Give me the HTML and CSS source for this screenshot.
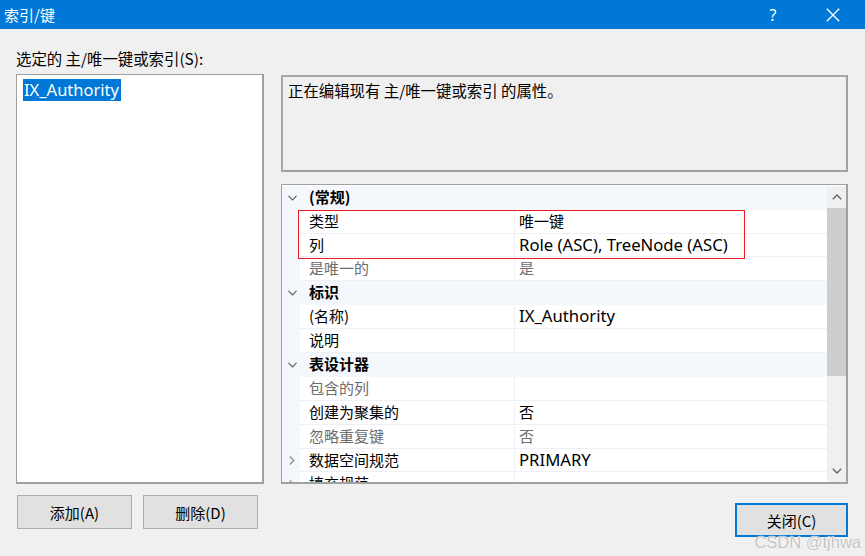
FILE: index.html
```html
<!DOCTYPE html>
<html lang="zh-CN">
<head>
<meta charset="utf-8">
<title>索引/键</title>
<link rel="stylesheet" href="styles.css">
</head>
<body>
<div class="window">
  <div class="titlebar">
    <span class="title">索引/键</span>
    <div class="tb-buttons">
      <span class="tb-help">?</span>
      <span class="tb-close">
        <svg width="14" height="14" viewBox="0 0 14 14"><path d="M0.8 0.8 L13.2 13.2 M13.2 0.8 L0.8 13.2" stroke="#fff" stroke-width="1.3" fill="none"/></svg>
      </span>
    </div>
  </div>
  <div class="content">
    <div class="left-col">
      <div class="label">选定的 主/唯一键或索引(S):</div>
      <div class="listbox">
        <span class="list-item selected">IX_Authority</span>
      </div>
    </div>
    <div class="right-col">
      <div class="desc">正在编辑现有 主/唯一键或索引 的属性。</div>
      <div class="propgrid">
        <div class="rows">
          <div class="row cat"><span class="gut"><svg class="chev" width="9" height="6" viewBox="0 0 9 6"><path d="M0.5 0.8 L4.5 4.8 L8.5 0.8" stroke="#606060" stroke-width="1.2" fill="none"/></svg></span><span class="cname">(常规)</span></div>
          <div class="row"><span class="gut"></span><span class="name">类型</span><span class="val">唯一键</span></div>
          <div class="row"><span class="gut"></span><span class="name">列</span><span class="val lt">Role (ASC), TreeNode (ASC)</span></div>
          <div class="row dis"><span class="gut"></span><span class="name">是唯一的</span><span class="val">是</span></div>
          <div class="row cat"><span class="gut"><svg class="chev" width="9" height="6" viewBox="0 0 9 6"><path d="M0.5 0.8 L4.5 4.8 L8.5 0.8" stroke="#606060" stroke-width="1.2" fill="none"/></svg></span><span class="cname">标识</span></div>
          <div class="row"><span class="gut"></span><span class="name">(名称)</span><span class="val lt">IX_Authority</span></div>
          <div class="row"><span class="gut"></span><span class="name">说明</span><span class="val"></span></div>
          <div class="row cat"><span class="gut"><svg class="chev" width="9" height="6" viewBox="0 0 9 6"><path d="M0.5 0.8 L4.5 4.8 L8.5 0.8" stroke="#606060" stroke-width="1.2" fill="none"/></svg></span><span class="cname">表设计器</span></div>
          <div class="row dis"><span class="gut"></span><span class="name">包含的列</span><span class="val"></span></div>
          <div class="row"><span class="gut"></span><span class="name">创建为聚集的</span><span class="val">否</span></div>
          <div class="row dis"><span class="gut"></span><span class="name">忽略重复键</span><span class="val">否</span></div>
          <div class="row"><span class="gut"><svg class="chev-r" width="6" height="9" viewBox="0 0 6 9"><path d="M0.8 0.5 L4.8 4.5 L0.8 8.5" stroke="#8a8a8a" stroke-width="1.2" fill="none"/></svg></span><span class="name">数据空间规范</span><span class="val lt">PRIMARY</span></div>
          <div class="row"><span class="gut"><svg class="chev-r" width="6" height="9" viewBox="0 0 6 9"><path d="M0.8 0.5 L4.8 4.5 L0.8 8.5" stroke="#8a8a8a" stroke-width="1.2" fill="none"/></svg></span><span class="name">填充规范</span><span class="val"></span></div>
        </div>
        <div class="scrollbar">
          <span class="arrow"><svg width="10" height="6" viewBox="0 0 10 6"><path d="M0.8 5.2 L5 1 L9.2 5.2" stroke="#606060" stroke-width="1.3" fill="none"/></svg></span>
          <div class="track"><div class="thumb"></div></div>
          <span class="arrow"><svg width="10" height="6" viewBox="0 0 10 6"><path d="M0.8 0.8 L5 5 L9.2 0.8" stroke="#606060" stroke-width="1.3" fill="none"/></svg></span>
        </div>
        <div class="highlight"></div>
      </div>
    </div>
  </div>
  <div class="footer">
    <div class="btn-group">
      <button class="btn">添加(A)</button>
      <button class="btn">删除(D)</button>
    </div>
    <button class="btn primary">关闭(C)</button>
  </div>
  <div class="watermark">CSDN @tjhwa</div>
</div>
</body>
</html>
```
FILE: styles.css
```css
* { box-sizing: border-box; }
html, body {
  margin: 0;
  padding: 0;
  width: 865px;
  height: 556px;
  overflow: hidden;
  background: #f0f0f0;
  font-family: "Noto Sans", "Noto Sans CJK SC", sans-serif;
  font-size: 15px;
  color: #000;
}
.window {
  position: relative;
  width: 865px;
  height: 556px;
}
.titlebar {
  height: 29px;
  background: #0078d7;
  color: #fff;
  display: flex;
  align-items: center;
  justify-content: space-between;
  padding-left: 4px;
}
.title {
  font-family: "Noto Sans CJK SC", sans-serif;
  font-size: 15px;
  line-height: 29px;
}
.tb-buttons {
  display: flex;
  align-items: center;
  height: 29px;
  padding-right: 9px;
}
.tb-help {
  width: 46px;
  text-align: center;
  font-size: 16px;
  margin-right: 14px;
}
.tb-close {
  width: 46px;
  display: flex;
  justify-content: center;
  align-items: center;
}
.content {
  display: flex;
  padding-left: 16px;
  height: 455px;
}
.left-col {
  width: 248px;
  display: flex;
  flex-direction: column;
}
.label {
  margin-top: 19px;
  height: 20px;
  line-height: 20px;
  font-family: "Noto Sans CJK SC", sans-serif;
  font-size: 15.4px;
}
.listbox {
  margin-top: 6px;
  height: 410px;
  background: #fff;
  border: 1px solid #a0a0a0;
  border-right-width: 2px;
  border-bottom-width: 2px;
  padding: 4px 0 0 6px;
}
.list-item {
  display: inline-block;
  height: 22px;
  line-height: 22px;
  padding: 0 2px 0 1px;
  font-size: 16.5px;
}
.list-item.selected {
  background: #0078d7;
  color: #fff;
}
.right-col {
  width: 567px;
  margin-left: 17px;
  display: flex;
  flex-direction: column;
  padding-top: 46px;
}
.desc {
  height: 97px;
  border: 2px solid #a0a0a0;
  border-top-color: #a8a8a8;
  border-left-color: #a8a8a8;
  padding: 3px 5px;
  line-height: 20px;
  font-family: "Noto Sans CJK SC", sans-serif;
  font-size: 15.4px;
}
.propgrid {
  position: relative;
  margin-top: 12px;
  height: 301px;
  border: 1px solid #a0a0a0;
  border-right-width: 2px;
  border-bottom-width: 2px;
  background: #fff;
  display: flex;
  padding-top: 1px;
  overflow: hidden;
}
.rows {
  flex: 1;
  display: flex;
  flex-direction: column;
}
.row {
  display: grid;
  grid-template-columns: 18px 215px 1fr;
  height: 23.9px;
  flex-shrink: 0;
}
.row > span {
  line-height: 22px;
  border-bottom: 1px solid #eef0f3;
  white-space: nowrap;
  overflow: hidden;
}
.gut {
  background: #f4f7fc;
  border-bottom: none !important;
  display: flex;
  align-items: center;
  justify-content: center;
}
.name {
  padding-left: 9px;
  border-right: 1px solid #eef0f3;
  font-family: "Noto Sans CJK SC", sans-serif;
}
.val {
  padding-left: 4px;
}
.val.lt { font-size: 16.7px; }
.row.dis > span { color: #6d6d6d; }
.row.cat {
  background: #f4f7fc;
  grid-template-columns: 18px 1fr;
}
.row.cat > span { border-bottom: none; }
.cname {
  padding-left: 9px;
  font-weight: bold;
  font-family: "Noto Sans CJK SC", sans-serif;
}
.chev { margin-left: 2px; }
.chev-r { margin-left: 2px; }
.scrollbar {
  width: 19px;
  background: #f0f0f0;
  display: flex;
  flex-direction: column;
}
.arrow {
  height: 22px;
  display: flex;
  align-items: center;
  justify-content: center;
}
.track {
  flex: 1;
}
.thumb {
  height: 168px;
  background: #cdcdcd;
}
.highlight {
  position: absolute;
  left: 16px;
  top: 25px;
  width: 447px;
  height: 49px;
  border: 1px solid #ee1c25;
  pointer-events: none;
}
.footer {
  display: flex;
  justify-content: space-between;
  padding: 11px 17px 0 17px;
}
.btn-group {
  display: flex;
  gap: 11px;
}
.btn {
  width: 115px;
  height: 34px;
  background: #e1e1e1;
  border: 1px solid #adadad;
  font-family: "Noto Sans CJK SC", sans-serif;
  font-size: 15px;
  line-height: 30px;
  color: #000;
  padding: 1px 0 0 0;
}
.btn.primary {
  width: 113px;
  margin-top: 8px;
  border: 2px solid #0078d7;
}
.watermark {
  position: absolute;
  right: 4px;
  bottom: 4px;
  font-family: "Liberation Sans", sans-serif;
  font-size: 16.5px;
  color: #c4c4c4;
  text-shadow: 0 0 1px #fff, 0 0 1px #fff;
}
```
